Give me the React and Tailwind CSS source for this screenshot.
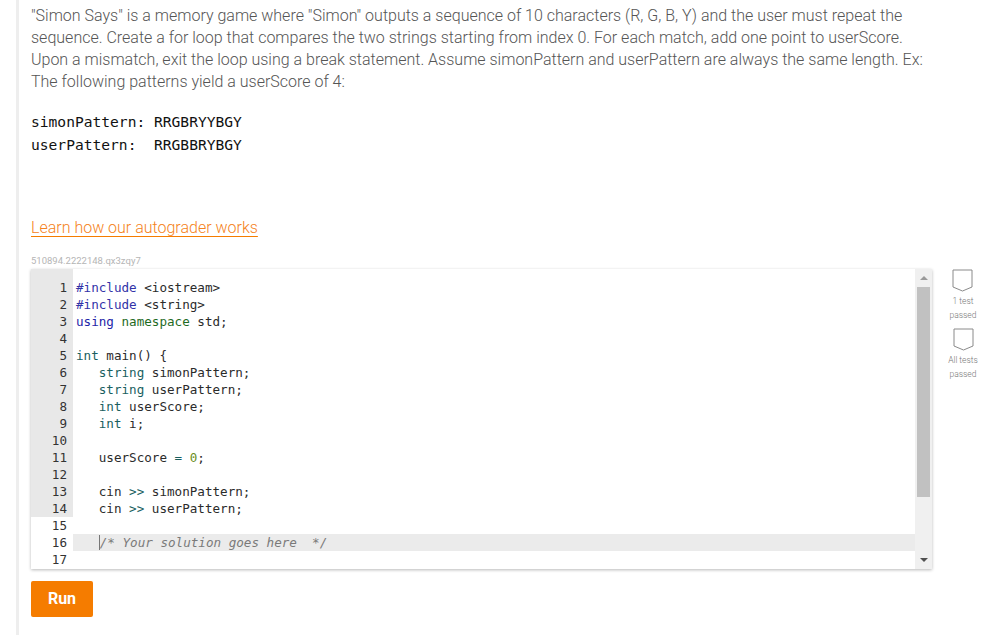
import React from 'react';

const K = 'text-[#1a5f5f]';
const P = 'text-[#3232a8]';
const N = 'text-[#2b2b2b]';

const LINES = [
  [[P, '#include'], [N, ' <iostream>']],
  [[P, '#include'], [N, ' <string>']],
  [['text-[#2424a8]', 'using'], [N, ' '], ['text-[#1f6b1f]', 'namespace'], [N, ' std;']],
  [],
  [[K, 'int'], [N, ' main() {']],
  [[N, '   '], [K, 'string'], [N, ' simonPattern;']],
  [[N, '   '], [K, 'string'], [N, ' userPattern;']],
  [[N, '   '], [K, 'int'], [N, ' userScore;']],
  [[N, '   '], [K, 'int'], [N, ' i;']],
  [],
  [[N, '   userScore '], ['text-[#1a5f5f]', '='], [N, ' '], ['text-[#6b8e23]', '0'], [N, ';']],
  [],
  [[N, '   cin '], [K, '>>'], [N, ' simonPattern;']],
  [[N, '   cin '], [K, '>>'], [N, ' userPattern;']],
  [],
  'comment',
  [],
];

function Badge({ lines }) {
  return (
    <div className="flex flex-col items-center">
      <svg width="21" height="23" viewBox="0 0 21 23">
        <path d="M1 1 H20 V18 L10.5 22 L1 18 Z" fill="none" stroke="#8a8a8a" strokeWidth="1" />
      </svg>
      <div className="mt-[3px] text-[8.5px] leading-[13.5px] text-[#777] text-center font-light whitespace-nowrap">
        {lines.map(l => <div key={l}>{l}</div>)}
      </div>
    </div>
  );
}

export default function App() {
  return (
    <div className="min-h-screen bg-white font-['Roboto',sans-serif]">
      <div className="ml-[16px] border-l-[3px] border-[#eeeeee] min-h-[635px] pl-[12px] pt-[5px]">
        <p className="text-[16px] leading-[22px] font-light text-[#555] whitespace-nowrap">
          "Simon Says" is a memory game where "Simon" outputs a sequence of 10 characters (R, G, B, Y) and the user must repeat the<br />
          sequence. Create a for loop that compares the two strings starting from index 0. For each match, add one point to userScore.<br />
          Upon a mismatch, exit the loop using a break statement. Assume simonPattern and userPattern are always the same length. Ex:<br />
          The following patterns yield a userScore of 4:
        </p>

        <div className="mt-[17px] font-['DejaVu_Sans_Mono',monospace] text-[14.6px] leading-[23px] text-[#111] whitespace-pre">
          <div>simonPattern: RRGBRYYBGY</div>
          <div>userPattern:  RRGBBRYBGY</div>
        </div>

        <a href="#" className="block mt-[61px] w-fit text-[16px] leading-[22px] font-light text-[#f58220] underline decoration-[#f57c00] underline-offset-[3px]">
          Learn how our autograder works
        </a>

        <div className="mt-[16px] text-[9.5px] leading-[12px] text-[#b5b5b5]">510894.2222148.qx3zqy7</div>

        <div className="mt-[2px] flex items-start">
          <div className="w-[901px] h-[300px] flex bg-white shadow-[0_1px_3px_rgba(0,0,0,0.28)] font-['DejaVu_Sans_Mono',monospace] text-[12.6px] leading-[17px]">
            <div className="flex-1 flex flex-col">
              <div className="flex h-[10px]">
                <div className="w-[42px] bg-[#e8e8e8]" />
              </div>
              {LINES.map((line, i) => (
                <div key={i} className="flex h-[17px]">
                  <div className={`w-[42px] pr-[6px] text-right text-[#333] ${i < 14 ? 'bg-[#e8e8e8]' : 'bg-white'}`}>{i + 1}</div>
                  {line === 'comment' ? (
                    <div className="flex-1 pl-[3px] bg-[#ebebeb] whitespace-pre text-[#7a7a7a] italic">
                      {'   '}<span className="border-l border-[#777]">/* Your solution goes here  */</span>
                    </div>
                  ) : (
                    <div className="flex-1 pl-[3px] whitespace-pre">
                      {line.map(([c, t], j) => <span key={j} className={c}>{t}</span>)}
                    </div>
                  )}
                </div>
              ))}
            </div>
            <div className="w-[17px] h-full bg-[#f0f0f0] flex flex-col items-center">
              <div className="h-[18px] flex items-center justify-center">
                <div className="w-0 h-0 border-l-[4px] border-r-[4px] border-b-[4px] border-l-transparent border-r-transparent border-b-[#9a9a9a]" />
              </div>
              <div className="w-[13px] h-[210px] bg-[#c1c1c1]" />
              <div className="flex-1" />
              <div className="h-[18px] flex items-center justify-center">
                <div className="w-0 h-0 border-l-[4px] border-r-[4px] border-t-[4px] border-l-transparent border-r-transparent border-t-[#505050]" />
              </div>
            </div>
          </div>

          <div className="ml-[11px] w-[40px] flex flex-col items-center gap-[6px]">
            <Badge lines={['1 test', 'passed']} />
            <Badge lines={['All tests', 'passed']} />
          </div>
        </div>

        <button className="mt-[12px] w-[62px] h-[36px] rounded-[2px] bg-[#f57c00] text-white text-[16px] font-bold">
          Run
        </button>
      </div>
    </div>
  );
}
